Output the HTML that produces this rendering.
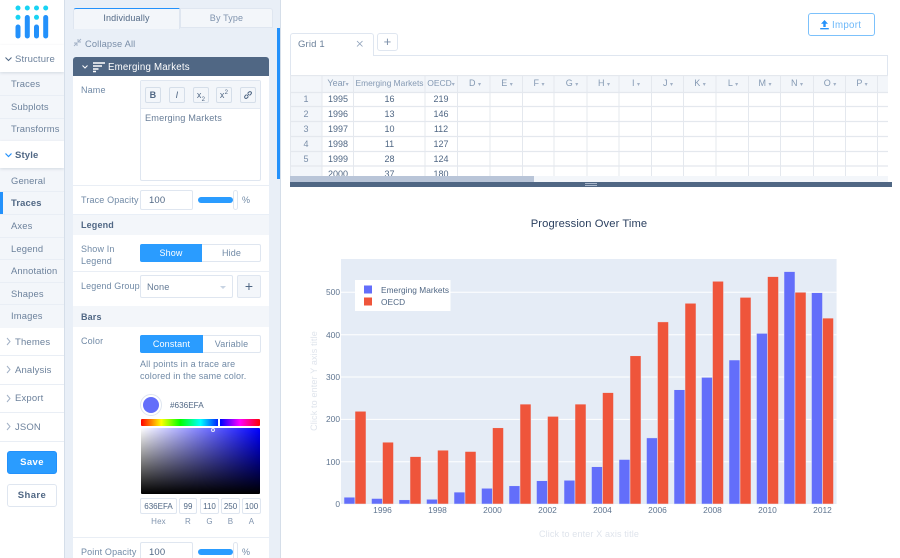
<!DOCTYPE html>
<html><head><meta charset="utf-8"><title>Chart Studio</title>
<style>
html,body{margin:0;padding:0;background:#fff;width:900px;height:558px;overflow:hidden}
#r{position:relative;width:900px;height:558px;overflow:hidden;font-family:"Liberation Sans",sans-serif;font-size:9.5px;color:#506784;letter-spacing:.15px;filter:blur(.3px)}
#r div,#r span.a{position:absolute;box-sizing:border-box;white-space:nowrap}
.t{line-height:12px;height:12px}
.nav{left:11px;color:#6d829c;font-size:9.4px}
.hd{left:0;width:64px;background:#fff;box-shadow:0 1px 3px rgba(80,103,132,.2)}
.sep{height:1px;background:#e9eef5}
.box{background:#fff;border:1px solid #dfe6f0;border-radius:2px}
.lab{left:81px;color:#718aa6;font-size:9px}
.sec{left:73px;width:196px;background:#f3f6fa}
.bt{top:87px;height:16px;width:16px;background:#f3f6fa;border:1px solid #d5dee9;border-radius:2px;text-align:center;line-height:14px;font-size:9px;color:#506784}
.tick{color:#5f7590;font-size:8.4px;line-height:10px;height:10px;letter-spacing:0}
.cen{text-align:center}
.hc{top:75px;height:17px;line-height:16px;text-align:center;color:#8499b3;font-size:9px;letter-spacing:0}
.cell{text-align:center;color:#506784;font-size:9px;line-height:14px;height:14px;letter-spacing:0}
</style></head><body><div id="r">

<!-- Left nav -->
<div style="left:0;top:0;width:64px;height:558px;background:#fff"></div>
<svg style="position:absolute;left:0;top:0" width="64" height="45">
<g fill="#19d3f3"><circle cx="18" cy="8" r="2.5"/><circle cx="27.3" cy="8" r="2.5"/><circle cx="36.5" cy="8" r="2.5"/><circle cx="45.7" cy="8" r="2.5"/><circle cx="18" cy="17.3" r="2.5"/><circle cx="36.5" cy="17.3" r="2.5"/></g>
<g fill="#2391fb"><rect x="15.5" y="24.5" width="5" height="14" rx="2.5"/><rect x="24.8" y="15" width="5" height="23.5" rx="2.5"/><rect x="34" y="24.5" width="5" height="14" rx="2.5"/><rect x="43.2" y="15" width="5" height="23.5" rx="2.5"/></g>
</svg>
<div style="left:0;top:72px;width:64px;height:69px;background:#f3f6fa"></div>
<div style="left:0;top:168px;width:64px;height:160px;background:#f3f6fa"></div>
<div class="hd" style="top:45px;height:27px"></div>
<div class="hd" style="top:141px;height:27px"></div>
<div class="sep" style="left:0;top:95px;width:64px"></div><div class="sep" style="left:0;top:118px;width:64px"></div>
<div class="sep" style="left:0;top:191px;width:64px"></div><div class="sep" style="left:0;top:214px;width:64px"></div><div class="sep" style="left:0;top:237px;width:64px"></div><div class="sep" style="left:0;top:259px;width:64px"></div><div class="sep" style="left:0;top:282px;width:64px"></div><div class="sep" style="left:0;top:304px;width:64px"></div>
<div class="sep" style="left:0;top:355px;width:64px"></div><div class="sep" style="left:0;top:384px;width:64px"></div><div class="sep" style="left:0;top:412px;width:64px"></div><div class="sep" style="left:0;top:441px;width:64px"></div>
<div style="left:0;top:192px;width:3px;height:22px;background:#2391fb"></div>
<svg style="position:absolute;left:0;top:0" width="14" height="440" fill="none" stroke-width="1">
<path d="M5.500 57.500l3 3 3-3" stroke="#506784"/><path d="M5.500 153.500l3 3 3-3" stroke="#2391fb" stroke-width="1.2"/>
<path d="M7 338l3 3.500-3 3.500M7 366l3 3.500-3 3.500M7 395l3 3.500-3 3.500M7 423l3 3.500-3 3.500" stroke="#a2b1c6"/>
</svg>
<div class="t" style="left:15px;top:54px;font-size:9.500px;color:#6d829c">Structure</div>
<div class="t nav" style="top:78px">Traces</div>
<div class="t nav" style="top:101px">Subplots</div>
<div class="t nav" style="top:123px">Transforms</div>
<div class="t" style="left:15px;top:150px;font-weight:bold;font-size:9.500px;color:#506784">Style</div>
<div class="t nav" style="top:175px">General</div>
<div class="t nav" style="top:197px;font-weight:bold;color:#506784">Traces</div>
<div class="t nav" style="top:220px">Axes</div>
<div class="t nav" style="top:243px">Legend</div>
<div class="t nav" style="top:265px">Annotation</div>
<div class="t nav" style="top:288px">Shapes</div>
<div class="t nav" style="top:310px">Images</div>
<div class="t" style="left:15px;top:337px;font-size:9.500px;color:#6d829c">Themes</div>
<div class="t" style="left:15px;top:365px;font-size:9.500px;color:#6d829c">Analysis</div>
<div class="t" style="left:15px;top:393px;font-size:9.500px;color:#6d829c">Export</div>
<div class="t" style="left:15px;top:422px;font-size:9.500px;color:#6d829c">JSON</div>
<div class="cen" style="left:7px;top:451px;width:50px;height:23px;background:#2a9cff;border:1px solid #2391fb;border-radius:3px;color:#fff;line-height:22px;font-weight:bold;font-size:9.500px;letter-spacing:.4px">Save</div>
<div class="cen" style="left:7px;top:484px;width:50px;height:23px;background:#fff;border:1px solid #dfe6f0;border-radius:3px;color:#506784;line-height:22px;font-weight:bold;font-size:9.500px;letter-spacing:.4px">Share</div>

<!-- Panel background -->
<div style="left:64px;top:0;width:217px;height:558px;background:#e9eff7;border-left:1px solid #d5dee9;border-right:1px solid #d5dee9"></div>
<div style="left:180px;top:8px;width:93px;height:20px;background:#f3f6fa;border:1px solid #dfe6f0;border-radius:0 3px 0 0;text-align:center;line-height:19px;color:#8094ae;font-size:9px">By Type</div>
<div style="left:73px;top:8px;width:107px;height:21px;background:#f3f6fa;border:1px solid #dfe6f0;border-top:1px solid #2391fb;border-bottom:0;border-radius:3px 0 0 0;text-align:center;line-height:19px;color:#506784;font-size:9px">Individually</div>
<div style="left:277px;top:28px;width:3px;height:151px;background:#2391fb"></div>
<svg style="position:absolute;left:73px;top:38px" width="10" height="10" stroke="#a2b1c6" fill="none"><path d="M1 8l3-3M4 8V5H1M8 1L5 4M5 1v3h3" stroke-width=".9"/></svg>
<div class="t" style="left:85px;top:38px;color:#7a8ea8;font-size:9.300px">Collapse All</div>
<div style="left:73px;top:76px;width:196px;height:482px;background:#fff"></div>
<div style="left:73px;top:57px;width:196px;height:19px;background:#506784;border-radius:3px 3px 0 0"></div>
<svg style="position:absolute;left:80px;top:60px" width="26" height="14" fill="none"><path d="M2.500 5.500l2.500 2.500 2.500-2.500" stroke="#fff"/><path d="M13 3h12M13 6h9M13 9h5.500M13 11.500h3" stroke="#fff" stroke-width="1.500"/></svg>
<div class="t" style="left:108px;top:61.500px;color:#fff;font-size:9.700px;letter-spacing:.2px">Emerging Markets</div>

<div class="t lab" style="top:84px">Name</div>
<div class="box" style="left:140px;top:80px;width:121px;height:101px"></div>
<div style="left:141px;top:81px;width:119px;height:28px;background:#f3f6fa;border-bottom:1px solid #e3e9f2"></div>
<div class="bt" style="left:145px;font-weight:bold">B</div>
<div class="bt" style="left:169px;font-style:italic">I</div>
<div class="bt" style="left:193px">x<sub style="font-size:6px">2</sub></div>
<div class="bt" style="left:216px">x<sup style="font-size:6px;line-height:0">2</sup></div>
<div class="bt" style="left:240px"><svg width="10" height="10" style="margin-top:2px" fill="none" stroke="#506784"><path d="M4 6l2-2M3.500 4.500L2 6a1.400 1.400 0 0 0 2 2L5.500 6.500M4.500 3.500L6 2a1.400 1.400 0 0 1 2 2L6.500 5.500"/></svg></div>
<div class="t" style="left:145px;top:112px;color:#6a7f99;font-size:9.200px">Emerging Markets</div>
<div class="sep" style="left:73px;top:185px;width:196px"></div>

<div class="t lab" style="top:194px">Trace Opacity</div>
<div class="box" style="left:140px;top:190px;width:53px;height:20px;padding-left:8px;line-height:19px;color:#506784;font-size:9.500px">100</div>
<div style="left:198px;top:197px;width:35px;height:6px;background:#2a9cff;border-radius:3px"></div>
<div style="left:233px;top:190px;width:5px;height:20px;background:#fff;border:1px solid #dfe6f0;border-radius:3px"></div>
<div class="t" style="left:242px;top:194px;font-size:9px;color:#718aa6">%</div>

<div class="sec" style="top:214px;height:21px;border-top:1px solid #e9eff7"></div>
<div class="t" style="left:81px;top:219px;font-weight:bold;font-size:9px">Legend</div>
<div class="t lab" style="top:243px">Show In</div>
<div class="t lab" style="top:255px">Legend</div>
<div style="left:140px;top:244px;width:121px;height:18px;background:#fff;border:1px solid #dfe6f0;border-radius:2px;text-align:center;padding-left:62px;line-height:16px;color:#718aa6;font-size:9px">Hide</div>
<div style="left:140px;top:244px;width:62px;height:18px;background:#2a9cff;border-radius:2px 0 0 2px;text-align:center;line-height:18px;color:#fff;font-size:9px">Show</div>
<div class="sep" style="left:73px;top:271px;width:196px"></div>
<div class="t lab" style="top:280px;letter-spacing:.1px">Legend Group</div>
<div class="box" style="left:140px;top:275px;width:93px;height:23px;padding-left:6px;line-height:22px;font-size:9.200px;color:#647a95">None</div>
<svg style="position:absolute;left:219px;top:285px" width="8" height="5"><path d="M1 1h6L4 4z" fill="#c8d4e3"/></svg>
<div class="cen" style="left:237px;top:275px;width:24px;height:23px;background:#f3f6fa;border:1px solid #dfe6f0;border-radius:2px;line-height:21px;font-size:14px;color:#506784">+</div>

<div class="sec" style="top:306px;height:21px"></div>
<div class="t" style="left:81px;top:311px;font-weight:bold;font-size:9px">Bars</div>
<div class="t lab" style="top:335px">Color</div>
<div style="left:140px;top:335px;width:121px;height:18px;background:#fff;border:1px solid #dfe6f0;border-radius:2px;text-align:center;padding-left:62px;line-height:16px;color:#718aa6;font-size:9px">Variable</div>
<div style="left:140px;top:335px;width:63px;height:18px;background:#2a9cff;border-radius:2px 0 0 2px;text-align:center;line-height:18px;color:#fff;font-size:9px">Constant</div>
<div class="t" style="left:140px;top:358px;font-size:9px;color:#718aa6">All points in a trace are</div>
<div class="t" style="left:140px;top:370px;font-size:9px;color:#718aa6">colored in the same color.</div>

<div style="left:140px;top:394px;width:22px;height:22px;border-radius:50%;background:#fff;border:1px solid #dfe6f0"></div>
<div style="left:143px;top:397px;width:16px;height:16px;border-radius:50%;background:#636efa"></div>
<div class="t" style="left:170px;top:400px;font-size:8.200px;color:#506784;letter-spacing:0">#636EFA</div>
<div style="left:140.500px;top:418.500px;width:119px;height:7px;border-radius:1px;background:linear-gradient(90deg,#f00,#ff0 17%,#0f0 33%,#0ff 50%,#00f 67%,#f0f 83%,#f00)"></div>
<div style="left:218px;top:418px;width:2px;height:8px;background:#fff"></div>
<div style="left:140.500px;top:428px;width:119px;height:66px;border-radius:1px;background:linear-gradient(180deg,rgba(0,0,0,0),#000),linear-gradient(90deg,#fff,#00f)"></div>
<div style="left:211px;top:428px;width:4px;height:4px;border:1px solid #e6e9f5;border-radius:50%"></div>

<div class="box cen" style="left:140px;top:498px;width:37px;height:16px;line-height:15px;font-size:8px;letter-spacing:0">636EFA</div>
<div class="box cen" style="left:179px;top:498px;width:18px;height:16px;line-height:15px;font-size:8px;letter-spacing:0">99</div>
<div class="box cen" style="left:200px;top:498px;width:19px;height:16px;line-height:15px;font-size:8px;letter-spacing:0">110</div>
<div class="box cen" style="left:221px;top:498px;width:19px;height:16px;line-height:15px;font-size:8px;letter-spacing:0">250</div>
<div class="box cen" style="left:242px;top:498px;width:19px;height:16px;line-height:15px;font-size:8px;letter-spacing:0">100</div>
<div class="t cen" style="left:140px;top:516px;width:37px;font-size:8px;color:#8094ae">Hex</div>
<div class="t cen" style="left:179px;top:516px;width:18px;font-size:8px;color:#8094ae">R</div>
<div class="t cen" style="left:200px;top:516px;width:19px;font-size:8px;color:#8094ae">G</div>
<div class="t cen" style="left:221px;top:516px;width:19px;font-size:8px;color:#8094ae">B</div>
<div class="t cen" style="left:242px;top:516px;width:19px;font-size:8px;color:#8094ae">A</div>
<div class="sep" style="left:73px;top:537px;width:196px"></div>
<div class="t lab" style="top:546px">Point Opacity</div>
<div class="box" style="left:140px;top:542px;width:53px;height:20px;padding-left:8px;line-height:19px;color:#506784;font-size:9.500px">100</div>
<div style="left:198px;top:549px;width:35px;height:6px;background:#2a9cff;border-radius:3px"></div>
<div style="left:233px;top:542px;width:5px;height:20px;background:#fff;border:1px solid #dfe6f0;border-radius:3px"></div>
<div class="t" style="left:242px;top:546px;font-size:9px;color:#718aa6">%</div>

<!-- Import -->
<div style="left:808px;top:13px;width:67px;height:23px;border:1px solid #7cc1fb;border-radius:3px;background:#fff;color:#6db8f9;line-height:23px;padding-left:23px;font-size:9.700px;letter-spacing:.3px">Import</div>
<svg style="position:absolute;left:819px;top:19px" width="11" height="12" fill="#2391fb"><path d="M5.500 1L9 4.700H6.700V8H4.300V4.700H2zM1.200 9h8.600v1.400H1.200z"/></svg>

<!-- Grid -->
<div style="left:290px;top:55px;width:598px;height:21px;border:1px solid #dfe6f0;background:#fff"></div>
<div style="left:290px;top:33px;width:84px;height:23px;background:#fff;border:1px solid #dfe6f0;border-bottom:0;border-radius:3px 3px 0 0;padding-left:7px;line-height:21px;color:#6a7f99;font-size:9.500px">Grid 1</div>
<div style="left:290px;top:55px;width:83px;height:2px;background:#fff;border-left:1px solid #dfe6f0"></div>
<svg style="position:absolute;left:356px;top:40px" width="8" height="8" stroke="#8c9fb8" fill="none"><path d="M1 1l5.500 5.500M6.500 1L1 6.500" stroke-width=".8"/></svg>
<div class="cen" style="left:377px;top:33px;width:21px;height:18px;background:#fff;border:1px solid #dfe6f0;border-radius:3px;line-height:15px;font-size:13px;color:#7a8ea8">+</div>

<div style="left:290px;top:75px;width:598px;height:17px;background:#f3f6fa"></div>
<div style="left:290px;top:92px;width:32px;height:84px;background:#f3f6fa"></div>
<svg style="position:absolute;left:290px;top:75px" width="602" height="102" stroke="#e4e8ee" fill="none">
<path d="M32 0V102M63.500 0V102M135 0V102M167.500 0V102M200 0V102M232.500 0V102M264 0V102M297 0V102M329 0V102M361.500 0V102M393.500 0V102M426 0V102M458.500 0V102M490.500 0V102M523.500 0V102M555.500 0V102M587.500 0V102"/>
<path d="M0 .5H598M0 17.500H598M0 31.500H598M0 46.500H598M0 61.500H598M0 76.500H598M0 91H598" stroke-width="1.300"/>
<path d="M.5 0V102" />
</svg>

<div class="hc" style="left:322px;width:32px">Year<span style="font-size:6px;color:#a2b1c6">▾</span></div>
<div class="hc" style="left:354px;width:71px;font-size:8.400px;line-height:17px">Emerging Markets</div>
<div class="hc" style="left:425px;width:32px;font-size:8.500px;line-height:17px">OECD<span style="font-size:6px;color:#a2b1c6">▾</span></div>
<div class="hc" style="left:465px;width:20px">D <span style="font-size:6px;color:#a2b1c6">▾</span></div>
<div class="hc" style="left:497px;width:20px">E <span style="font-size:6px;color:#a2b1c6">▾</span></div>
<div class="hc" style="left:529px;width:20px">F <span style="font-size:6px;color:#a2b1c6">▾</span></div>
<div class="hc" style="left:562px;width:20px">G <span style="font-size:6px;color:#a2b1c6">▾</span></div>
<div class="hc" style="left:594px;width:20px">H <span style="font-size:6px;color:#a2b1c6">▾</span></div>
<div class="hc" style="left:626px;width:20px">I <span style="font-size:6px;color:#a2b1c6">▾</span></div>
<div class="hc" style="left:658px;width:20px">J <span style="font-size:6px;color:#a2b1c6">▾</span></div>
<div class="hc" style="left:690px;width:20px">K <span style="font-size:6px;color:#a2b1c6">▾</span></div>
<div class="hc" style="left:723px;width:20px">L <span style="font-size:6px;color:#a2b1c6">▾</span></div>
<div class="hc" style="left:755px;width:20px">M <span style="font-size:6px;color:#a2b1c6">▾</span></div>
<div class="hc" style="left:787px;width:20px">N <span style="font-size:6px;color:#a2b1c6">▾</span></div>
<div class="hc" style="left:820px;width:20px">O <span style="font-size:6px;color:#a2b1c6">▾</span></div>
<div class="hc" style="left:852px;width:20px">P <span style="font-size:6px;color:#a2b1c6">▾</span></div>

<div class="cell" style="left:290px;top:92px;width:32px;color:#7a8ea8">1</div><div class="cell" style="left:322px;top:92px;width:32px">1995</div><div class="cell" style="left:354px;top:92px;width:71px">16</div><div class="cell" style="left:425px;top:92px;width:32px">219</div>
<div class="cell" style="left:290px;top:107px;width:32px;color:#7a8ea8">2</div><div class="cell" style="left:322px;top:107px;width:32px">1996</div><div class="cell" style="left:354px;top:107px;width:71px">13</div><div class="cell" style="left:425px;top:107px;width:32px">146</div>
<div class="cell" style="left:290px;top:122px;width:32px;color:#7a8ea8">3</div><div class="cell" style="left:322px;top:122px;width:32px">1997</div><div class="cell" style="left:354px;top:122px;width:71px">10</div><div class="cell" style="left:425px;top:122px;width:32px">112</div>
<div class="cell" style="left:290px;top:137px;width:32px;color:#7a8ea8">4</div><div class="cell" style="left:322px;top:137px;width:32px">1998</div><div class="cell" style="left:354px;top:137px;width:71px">11</div><div class="cell" style="left:425px;top:137px;width:32px">127</div>
<div class="cell" style="left:290px;top:152px;width:32px;color:#7a8ea8">5</div><div class="cell" style="left:322px;top:152px;width:32px">1999</div><div class="cell" style="left:354px;top:152px;width:71px">28</div><div class="cell" style="left:425px;top:152px;width:32px">124</div>
<div class="cell" style="left:322px;top:167px;width:32px">2000</div><div class="cell" style="left:354px;top:167px;width:71px">37</div><div class="cell" style="left:425px;top:167px;width:32px">180</div>

<div style="left:290px;top:176px;width:598px;height:5.500px;background:#f3f6fa"></div>
<div style="left:290px;top:176px;width:244px;height:5.500px;background:#b9c5d8"></div>
<div style="left:290px;top:181.500px;width:602px;height:5.500px;background:#506784"></div>
<div style="left:585px;top:183px;width:12px;height:3px;background:repeating-linear-gradient(#a9b7cb 0 1px,#506784 1px 2px)"></div>

<!-- Chart -->
<div class="cen" style="left:440px;top:216px;width:298px;height:16px;line-height:16px;font-size:11.200px;color:#2a3f5f;letter-spacing:.1px">Progression Over Time</div>
<svg style="position:absolute;left:0;top:0" width="900" height="558">
<rect x="341" y="259" width="495.600" height="245" fill="#e5ecf6"/>
<path d="M341 292.300H836.600M341 334.700H836.600M341 377H836.600M341 419.400H836.600M341 461.700H836.600" stroke="#fff" stroke-width="1"/>
<g fill="#636efa" stroke="#e5ecf6" stroke-width=".5">
<rect x="344" y="497.200" width="11" height="6.800"/><rect x="371.500" y="498.500" width="11" height="5.500"/><rect x="399" y="499.800" width="11" height="4.200"/><rect x="426.500" y="499.300" width="11" height="4.700"/><rect x="454" y="492.100" width="11" height="11.900"/><rect x="481.500" y="488.300" width="11" height="15.700"/><rect x="509" y="485.800" width="11" height="18.200"/><rect x="536.500" y="480.700" width="11" height="23.300"/><rect x="564" y="480.300" width="11" height="23.700"/><rect x="591.500" y="466.700" width="11" height="37.300"/><rect x="619" y="459.500" width="11" height="44.500"/><rect x="646.500" y="437.900" width="11" height="66.100"/><rect x="674" y="389.700" width="11" height="114.300"/><rect x="701.500" y="377.400" width="11" height="126.600"/><rect x="729" y="360" width="11" height="144"/><rect x="756.500" y="333.400" width="11" height="170.600"/><rect x="784" y="271.600" width="11" height="232.400"/><rect x="811.500" y="292.700" width="11" height="211.300"/>
</g>
<g fill="#ef553b" stroke="#e5ecf6" stroke-width=".5">
<rect x="355" y="411.300" width="11" height="92.700"/><rect x="382.500" y="442.200" width="11" height="61.800"/><rect x="410" y="456.600" width="11" height="47.400"/><rect x="437.500" y="450.200" width="11" height="53.800"/><rect x="465" y="451.500" width="11" height="52.500"/><rect x="492.500" y="427.800" width="11" height="76.200"/><rect x="520" y="404.100" width="11" height="99.900"/><rect x="547.500" y="416.400" width="11" height="87.600"/><rect x="575" y="404.100" width="11" height="99.900"/><rect x="602.500" y="392.600" width="11" height="111.400"/><rect x="630" y="355.800" width="11" height="148.200"/><rect x="657.500" y="321.900" width="11" height="182.100"/><rect x="685" y="303.300" width="11" height="200.700"/><rect x="712.500" y="281.300" width="11" height="222.700"/><rect x="740" y="297.400" width="11" height="206.600"/><rect x="767.500" y="276.600" width="11" height="227.400"/><rect x="795" y="292.300" width="11" height="211.700"/><rect x="822.500" y="318.100" width="11" height="185.900"/>
</g>
<rect x="355" y="280" width="95.500" height="31" fill="#fff"/>
<rect x="364" y="285.500" width="8" height="8" fill="#636efa"/>
<rect x="364" y="297.500" width="8" height="8" fill="#ef553b"/>
</svg>
<div class="t" style="left:381px;top:284px;font-size:8.300px;color:#506784;letter-spacing:.05px">Emerging Markets</div>
<div class="t" style="left:381px;top:296px;font-size:8.300px;color:#506784;letter-spacing:.05px">OECD</div>
<div class="tick" style="left:320px;top:287.300px;width:20px;text-align:right">500</div>
<div class="tick" style="left:320px;top:329.700px;width:20px;text-align:right">400</div>
<div class="tick" style="left:320px;top:372px;width:20px;text-align:right">300</div>
<div class="tick" style="left:320px;top:414.400px;width:20px;text-align:right">200</div>
<div class="tick" style="left:320px;top:456.700px;width:20px;text-align:right">100</div>
<div class="tick" style="left:320px;top:499px;width:20px;text-align:right">0</div>
<div class="tick cen" style="left:367.500px;top:505px;width:30px">1996</div>
<div class="tick cen" style="left:422.500px;top:505px;width:30px">1998</div>
<div class="tick cen" style="left:477.500px;top:505px;width:30px">2000</div>
<div class="tick cen" style="left:532.500px;top:505px;width:30px">2002</div>
<div class="tick cen" style="left:587.500px;top:505px;width:30px">2004</div>
<div class="tick cen" style="left:642.500px;top:505px;width:30px">2006</div>
<div class="tick cen" style="left:697.500px;top:505px;width:30px">2008</div>
<div class="tick cen" style="left:752.500px;top:505px;width:30px">2010</div>
<div class="tick cen" style="left:807.500px;top:505px;width:30px">2012</div>
<div class="cen" style="left:489px;top:528px;width:200px;height:12px;line-height:12px;font-size:9px;color:#dfe4ec">Click to enter X axis title</div>
<div class="cen" style="left:253.500px;top:375px;width:120px;height:12px;line-height:12px;font-size:9px;color:#dfe4ec;transform:rotate(-90deg)">Click to enter Y axis title</div>
</div></body></html>
